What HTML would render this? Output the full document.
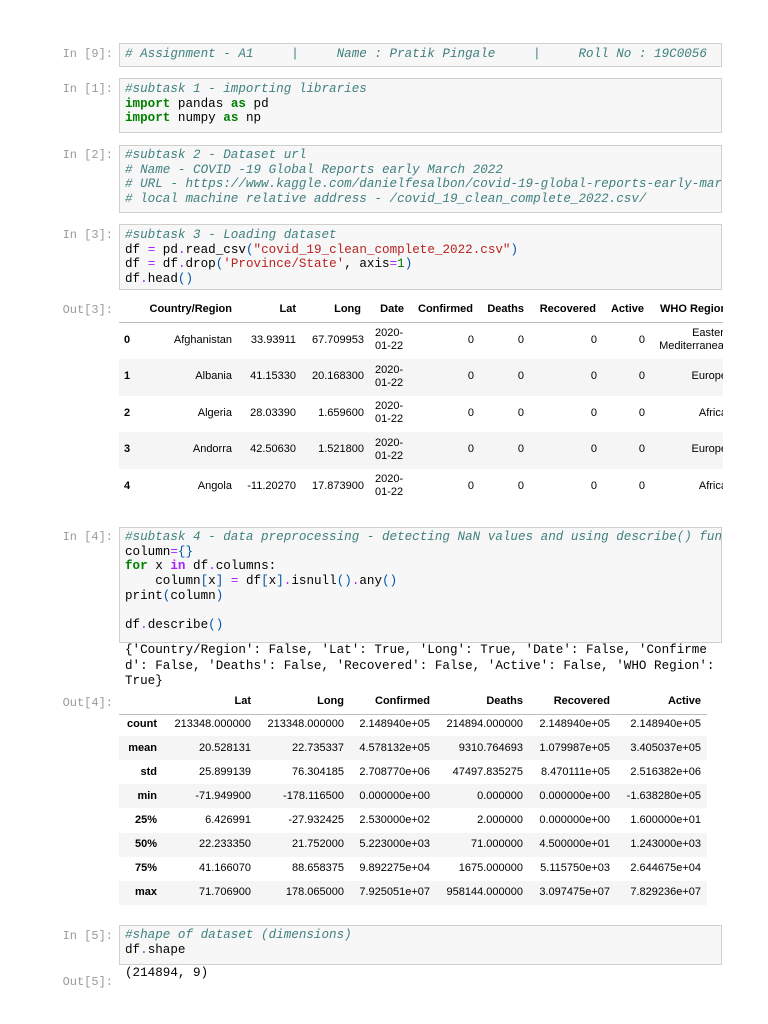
<!DOCTYPE html>
<html><head><meta charset="utf-8"><style>
*{margin:0;padding:0;box-sizing:border-box}
body{width:768px;height:1024px;background:#fff;position:relative;overflow:hidden;font-family:"Liberation Sans",sans-serif}
.p{position:absolute;left:0;width:113px;text-align:right;font:12px/15px "Liberation Mono",monospace;color:#9a9a9a}
.c{position:absolute;left:119px;width:603px;background:#f7f7f7;border:1px solid #cfcfcf;overflow:hidden}
pre{position:absolute;left:125px;font:12.6px/14.7px "Liberation Mono",monospace;color:#000;white-space:pre}
.cm{color:#408080;font-style:italic}
.k{color:#008000;font-weight:bold}
.s{color:#ba2121}
.n{color:#008000}
.o{color:#aa22ff}
.b{color:#0055aa}
.t{position:absolute;font-size:11px;line-height:13px;color:#000;white-space:nowrap}
.h{font-weight:bold}
.r{text-align:right}
.g{position:absolute;background:#f5f5f5}
.ln{position:absolute;height:1px;background:#bdbdbd}
</style></head><body>

<div class="p" style="top:47px">In [9]:</div>
<div class="c" style="top:43px;height:24px"></div>
<pre style="top:47px"><span class="cm"># Assignment - A1     |     Name : Pratik Pingale     |     Roll No : 19C0056</span></pre>

<div class="p" style="top:82px">In [1]:</div>
<div class="c" style="top:78px;height:55px"></div>
<pre style="top:82px"><span class="cm">#subtask 1 - importing libraries</span>
<span class="k">import</span> pandas <span class="k">as</span> pd
<span class="k">import</span> numpy <span class="k">as</span> np</pre>

<div class="p" style="top:148px">In [2]:</div>
<div class="c" style="top:145px;height:68px"></div>
<div style="position:absolute;left:0;top:0;width:721px;height:300px;overflow:hidden">
<pre style="top:148px"><span class="cm">#subtask 2 - Dataset url
# Name - COVID -19 Global Reports early March 2022
# URL - https://www.kaggle.com/danielfesalbon/covid-19-global-reports-early-march-2022
# local machine relative address - /covid_19_clean_complete_2022.csv/</span></pre>
</div>

<div class="p" style="top:228px">In [3]:</div>
<div class="c" style="top:224px;height:66px"></div>
<pre style="top:228px"><span class="cm">#subtask 3 - Loading dataset</span>
df <span class="o">=</span> pd<span class="o">.</span>read_csv<span class="b">(</span><span class="s">"covid_19_clean_complete_2022.csv"</span><span class="b">)</span>
df <span class="o">=</span> df<span class="o">.</span>drop<span class="b">(</span><span class="s">'Province/State'</span>, axis<span class="o">=</span><span class="n">1</span><span class="b">)</span>
df<span class="o">.</span>head<span class="b">()</span></pre>

<div class="p" style="top:303px">Out[3]:</div>
<div style="position:absolute;left:0;top:0;width:723px;height:520px;overflow:hidden">
<div class="ln" style="left:119px;top:322px;width:610px"></div>
<div class="g" style="left:119px;top:359px;width:610px;height:37px"></div>
<div class="g" style="left:119px;top:432px;width:610px;height:37px"></div>
<div class="t h r" style="left:100px;width:132px;top:303px">Country/Region</div>
<div class="t h r" style="left:240px;width:56px;top:303px">Lat</div>
<div class="t h r" style="left:300px;width:61px;top:303px">Long</div>
<div class="t h r" style="left:370px;width:34px;top:303px">Date</div>
<div class="t h r" style="left:400px;width:73px;top:303px">Confirmed</div>
<div class="t h r" style="left:470px;width:54px;top:303px">Deaths</div>
<div class="t h r" style="left:520px;width:76px;top:303px">Recovered</div>
<div class="t h r" style="left:600px;width:44px;top:303px">Active</div>
<div class="t h" style="left:660px;top:303px">WHO Region</div>

<div id="rows"></div>
</div>

<div class="p" style="top:530px">In [4]:</div>
<div class="c" style="top:527px;height:116px"></div>
<div style="position:absolute;left:0;top:0;width:721px;height:700px;overflow:hidden">
<pre style="top:530px"><span class="cm">#subtask 4 - data preprocessing - detecting NaN values and using describe() function</span>
column<span class="o">=</span><span class="b">{}</span>
<span class="k">for</span> x <span class="k" style="color:#aa22ff">in</span> df<span class="o">.</span>columns:
    column<span class="b">[</span>x<span class="b">]</span> <span class="o">=</span> df<span class="b">[</span>x<span class="b">]</span><span class="o">.</span>isnull<span class="b">()</span><span class="o">.</span>any<span class="b">()</span>
print<span class="b">(</span>column<span class="b">)</span>

df<span class="o">.</span>describe<span class="b">()</span></pre>
</div>
<pre style="top:643px;line-height:15.5px">{'Country/Region': False, 'Lat': True, 'Long': True, 'Date': False, 'Confirme
d': False, 'Deaths': False, 'Recovered': False, 'Active': False, 'WHO Region':
True}</pre>

<div class="p" style="top:696px">Out[4]:</div>
<div class="ln" style="left:119px;top:714px;width:588px"></div>
<div id="desc"></div>

<div class="p" style="top:929px">In [5]:</div>
<div class="c" style="top:925px;height:40px"></div>
<pre style="top:928px"><span class="cm">#shape of dataset (dimensions)</span>
df<span class="o">.</span>shape</pre>
<pre style="top:966px">(214894, 9)</pre>
<div class="p" style="top:975px">Out[5]:</div>

<div style="position:absolute;left:0;top:0">
<!-- table 1 rows -->
</div>
<script>
(function(){
var R=document.getElementById('rows');var h='';
var d=[["0","Afghanistan","33.93911","67.709953","Eastern|Mediterranean"],["1","Albania","41.15330","20.168300","Europe"],["2","Algeria","28.03390","1.659600","Africa"],["3","Andorra","42.50630","1.521800","Europe"],["4","Angola","-11.20270","17.873900","Africa"]];
for(var i=0;i<5;i++){var c=340+i*36.5,y=c-6.5;var r=d[i];
h+='<div class="t h" style="left:124px;top:'+y+'px">'+r[0]+'</div>';
h+='<div class="t r" style="left:100px;width:132px;top:'+y+'px">'+r[1]+'</div>';
h+='<div class="t r" style="left:230px;width:66px;top:'+y+'px">'+r[2]+'</div>';
h+='<div class="t r" style="left:290px;width:74px;top:'+y+'px">'+r[3]+'</div>';
h+='<div class="t" style="left:375px;top:'+(c-13)+'px">2020-<br>01-22</div>';
h+='<div class="t r" style="left:400px;width:74px;top:'+y+'px">0</div>';
h+='<div class="t r" style="left:470px;width:54px;top:'+y+'px">0</div>';
h+='<div class="t r" style="left:520px;width:77px;top:'+y+'px">0</div>';
h+='<div class="t r" style="left:600px;width:45px;top:'+y+'px">0</div>';
var w=r[4].split('|');
if(w.length>1)h+='<div class="t r" style="left:630px;width:100px;top:'+(c-13)+'px">'+w[0]+'<br>'+w[1]+'</div>';
else h+='<div class="t r" style="left:630px;width:97px;top:'+y+'px">'+w[0]+'</div>';}
R.innerHTML=h;
var D=document.getElementById('desc');h='';
var rx=[157,251,344,430,523,610,701];
var hd=["","Lat","Long","Confirmed","Deaths","Recovered","Active"];
for(var j=1;j<7;j++)h+='<div class="t h r" style="left:'+(rx[j]-100)+'px;width:100px;top:695px">'+hd[j]+'</div>';
var rows=[["count","213348.000000","213348.000000","2.148940e+05","214894.000000","2.148940e+05","2.148940e+05"],
["mean","20.528131","22.735337","4.578132e+05","9310.764693","1.079987e+05","3.405037e+05"],
["std","25.899139","76.304185","2.708770e+06","47497.835275","8.470111e+05","2.516382e+06"],
["min","-71.949900","-178.116500","0.000000e+00","0.000000","0.000000e+00","-1.638280e+05"],
["25%","6.426991","-27.932425","2.530000e+02","2.000000","0.000000e+00","1.600000e+01"],
["50%","22.233350","21.752000","5.223000e+03","71.000000","4.500000e+01","1.243000e+03"],
["75%","41.166070","88.658375","9.892275e+04","1675.000000","5.115750e+03","2.644675e+04"],
["max","71.706900","178.065000","7.925051e+07","958144.000000","3.097475e+07","7.829236e+07"]];
for(var i=0;i<8;i++){var c=724+i*24.1;
if(i%2==1)h+='<div class="g" style="left:119px;top:'+(c-12)+'px;width:588px;height:24px"></div>';
for(var j=0;j<7;j++)h+='<div class="t r'+(j==0?' h':'')+'" style="left:'+(rx[j]-100)+'px;width:100px;top:'+(c-6.5)+'px">'+rows[i][j]+'</div>';}
D.innerHTML=h;
})();
</script>
</body></html>
